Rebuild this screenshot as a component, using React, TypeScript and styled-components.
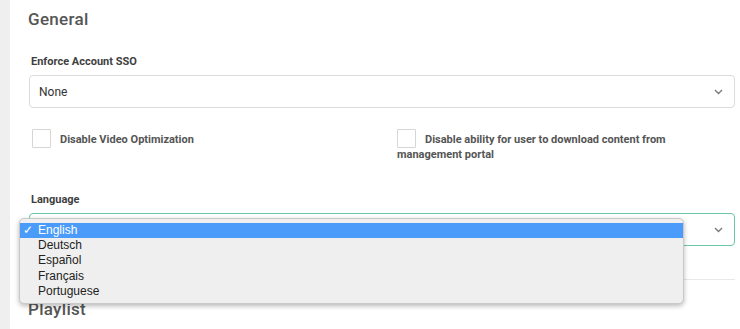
import React from 'react';
import styled, { createGlobalStyle } from 'styled-components';

const GlobalStyle = createGlobalStyle`
  html, body {
    margin: 0;
    padding: 0;
    background: #ffffff;
    font-family: Roboto, "Noto Sans", Arial, sans-serif;
  }
`;

const Page = styled.div`
  display: flex;
  width: 740px;
  height: 329px;
  overflow: hidden;
`;

const Gutter = styled.div`
  width: 10px;
  flex-shrink: 0;
  background: #efefef;
`;

const Panel = styled.div`
  flex: 1;
  position: relative;
  padding: 0 5px 0 19px;
  background: #fff;
`;

const Heading = styled.h2<{ $top: number }>`
  margin: ${(p) => p.$top}px 0 0 -1px;
  font-size: 17px;
  line-height: 20px;
  font-weight: 500;
  letter-spacing: 0.3px;
  color: #555;
`;

const Field = styled.div<{ $top: number }>`
  margin-top: ${(p) => p.$top}px;
`;

const Label = styled.div`
  margin: 0 0 7px 2px;
  font-size: 11px;
  line-height: 13px;
  font-weight: 700;
  color: #3f3f3f;
`;

const SelectBox = styled.div<{ $focused?: boolean }>`
  display: flex;
  align-items: center;
  justify-content: space-between;
  box-sizing: border-box;
  height: 33px;
  padding: 0 11px 0 9px;
  border: 1px solid ${(p) => (p.$focused ? '#6cc6a6' : '#dcdcdc')};
  border-radius: 4px;
  font-size: 12px;
  color: #333;
`;

const Chevron = () => (
  <svg width="9" height="6" viewBox="0 0 9 6">
    <polyline points="1,1 4.5,4.5 8,1" fill="none" stroke="#7a7a7a" strokeWidth="1.4" />
  </svg>
);

const CheckRow = styled.div`
  display: grid;
  grid-template-columns: 365px 1fr;
  margin-top: 21px;
  padding-left: 3px;
`;

const CheckItem = styled.div`
  padding: 3px 40px 0 0;
  font-size: 11px;
  line-height: 15px;
  font-weight: 700;
  color: #555;
`;

const Box = styled.span`
  float: left;
  box-sizing: border-box;
  width: 19px;
  height: 19px;
  margin: -3px 9px -1px 0;
  border: 1px solid #d6d6d2;
  border-radius: 1px;
  background: #fff;
`;

const Divider = styled.hr`
  margin: 33px 0 0;
  border: 0;
  border-top: 1px solid #e8e8e8;
`;

const Popup = styled.ul`
  position: absolute;
  left: 9px;
  top: 218px;
  width: 663px;
  margin: 0;
  padding: 4px 0;
  list-style: none;
  background: #efefef;
  border: 1px solid #c9c9c9;
  border-radius: 5px;
  box-shadow: 0 2px 5px rgba(0, 0, 0, 0.28);
  font-family: "Liberation Sans", Arial, sans-serif;
  font-size: 12px;
`;

const Option = styled.li<{ $selected?: boolean }>`
  position: relative;
  height: 15.2px;
  line-height: 15.2px;
  padding-left: 18px;
  color: ${(p) => (p.$selected ? '#fff' : '#222')};
  background: ${(p) => (p.$selected ? '#4a9bfa' : 'transparent')};
`;

const Tick = styled.span`
  position: absolute;
  left: 3px;
  top: 0;
`;

const languages = ['English', 'Deutsch', 'Español', 'Français', 'Portuguese'];

export default function App() {
  return (
    <>
      <GlobalStyle />
      <Page>
        <Gutter />
        <Panel>
          <Heading $top={9}>General</Heading>
          <Field $top={26}>
            <Label>Enforce Account SSO</Label>
            <SelectBox>
              <span>None</span>
              <Chevron />
            </SelectBox>
          </Field>
          <CheckRow>
            <CheckItem>
              <Box />
              Disable Video Optimization
            </CheckItem>
            <CheckItem>
              <Box />
              Disable ability for user to download content from management portal
            </CheckItem>
          </CheckRow>
          <Field $top={31}>
            <Label>Language</Label>
            <SelectBox $focused>
              <span>English</span>
              <Chevron />
            </SelectBox>
          </Field>
          <Divider />
          <Heading $top={19}>Playlist</Heading>
          <Popup>
            {languages.map((l, i) => (
              <Option key={l} $selected={i === 0}>
                {i === 0 && <Tick>✓</Tick>}
                {l}
              </Option>
            ))}
          </Popup>
        </Panel>
      </Page>
    </>
  );
}
